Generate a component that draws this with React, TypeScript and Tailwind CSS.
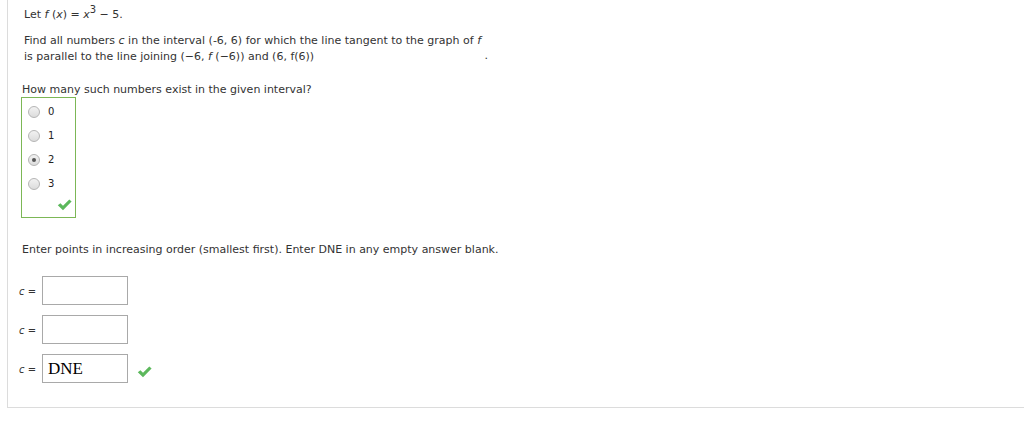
import React from 'react'

const Check = ({ className = '' }: { className?: string }) => (
  <svg className={className} width="15" height="12" viewBox="0 0 15 12">
    <path d="M0.8 6.3 L3.4 4.2 L6 6.8 L12.3 0.6 L14.6 2.6 L6 11.2 Z" fill="#5cb85c" />
  </svg>
)

const Radio = ({ checked = false }: { checked?: boolean }) => (
  <span className="relative inline-block h-[12px] w-[12px] rounded-full border border-[#b5b5b5] bg-gradient-to-b from-[#f2f2f2] to-[#dcdcdc]">
    {checked && (
      <span className="absolute left-[3px] top-[3px] h-[4px] w-[4px] rounded-full bg-[#555]" />
    )}
  </span>
)

const Fx = ({ children }: { children: React.ReactNode }) => (
  <span className="italic">{children}</span>
)

const AnswerRow = ({ value, correct }: { value?: string; correct?: boolean }) => (
  <div className="flex items-center">
    <span className="w-[34px] whitespace-nowrap pl-[11px] pt-[2px] text-[10px] text-[#333]">
      <Fx>c</Fx> =
    </span>
    <div className="flex h-[29px] w-[86px] items-center border border-[#a9a9a9] bg-white px-[5px] font-['Liberation_Serif',serif] text-[17px] text-black">
      {value}
    </div>
    {correct && <Check className="ml-[9px] mt-[6px]" />}
  </div>
)

export default function App() {
  return (
    <div className="h-[426px] w-[1024px] bg-white font-['DejaVu_Sans',Verdana,sans-serif] text-[11px] leading-[16px] text-[#333]">
      <div className="ml-[7px] h-[408px] border-b border-l border-[#dcdcdc] pl-[15px] pt-[7px]">
        <p className="pl-[1px]">
          Let <Fx>f</Fx> (<Fx>x</Fx>) = <Fx>x</Fx>
          <sup className="text-[10px]">3</sup> − 5.
        </p>

        <div className="mt-[10px] flex w-[465px] items-end justify-between pl-[1px]">
          <p>
            Find all numbers <Fx>c</Fx> in the interval (-6, 6) for which the line tangent to the graph of <Fx>f</Fx>
            <br />
            is parallel to the line joining (−6, <Fx>f</Fx> (−6)) and (6, f(6))
          </p>
          <span className="pb-[1px]">.</span>
        </div>

        <p className="mt-[17px] -ml-[1px]">How many such numbers exist in the given interval?</p>

        <div className="-ml-[2px] -mt-[1px] flex h-[121px] w-[55px] flex-col border border-[#7cb756] pl-[6px] pt-[2px]">
          {['0', '1', '2', '3'].map((n) => (
            <label key={n} className="flex h-[24px] items-center gap-[8px] leading-none">
              <Radio checked={n === '2'} />
              <span className="text-[10px] text-[#222]">{n}</span>
            </label>
          ))}
          <div className="mt-[3px] flex justify-end pr-[3px]">
            <Check />
          </div>
        </div>

        <p className="mt-[24px] -ml-[1px]">
          Enter points in increasing order (smallest first). Enter DNE in any empty answer blank.
        </p>

        <div className="-ml-[15px] mt-[18px] flex flex-col gap-[10px]">
          <AnswerRow />
          <AnswerRow />
          <AnswerRow value="DNE" correct />
        </div>
      </div>
    </div>
  )
}
